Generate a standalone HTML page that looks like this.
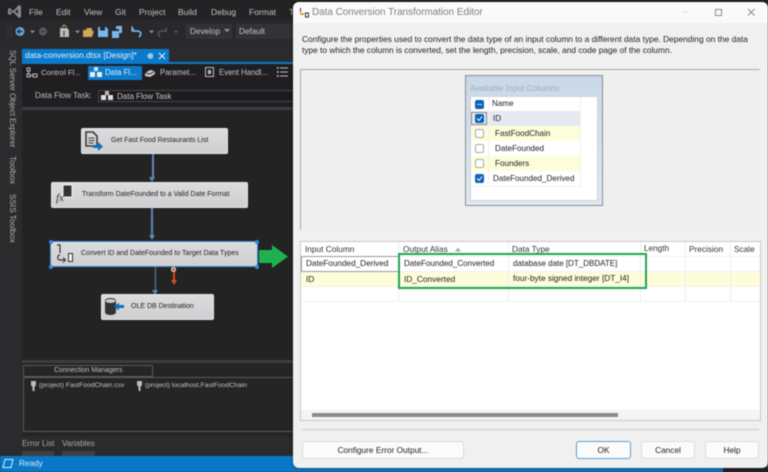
<!DOCTYPE html>
<html><head><meta charset="utf-8">
<style>
html,body{margin:0;padding:0;width:768px;height:472px;overflow:hidden;background:#2b2b2e}
body{position:relative;font-family:"Liberation Sans",sans-serif;filter:blur(.45px)}
.a{position:absolute}
.t{position:absolute;white-space:nowrap;line-height:12px;font-size:9px}
.m{color:#c2c2c2;font-size:8.500px}
.box{position:absolute;background:linear-gradient(#dcdcde,#cfcfd2);border-radius:2px;border:1px solid #e6e6e6;box-sizing:border-box}
.n{position:absolute;color:#222;font-size:7px;line-height:10px;white-space:nowrap}
.cb{position:absolute;width:9px;height:9px;box-sizing:border-box;border-radius:2px}
.on{background:#0a63b8}
.off{background:#fdfdfd;border:1px solid #a8a8a8}
.btn{position:absolute;box-sizing:border-box;height:18px;background:#fbfbfb;border:1px solid #dcdcdc;border-radius:3px;text-align:center;line-height:16px;font-size:8.300px;color:#222}
.v{position:absolute;width:1px;background:#ececec}
.h{position:absolute;height:1px;background:#f0f0f0}
.l{color:#222;font-size:8.100px}
</style></head><body>

<!-- top chrome -->
<div class="a" style="left:0;top:0;width:768px;height:20px;background:#232326"></div>
<div class="a" style="left:0;top:20px;width:768px;height:22px;background:#29292c"></div>
<svg class="a" style="left:7px;top:4px" width="15" height="15" viewBox="0 0 15 15"><path d="M1 5l2-1 3 3 6-6 2 1v11l-2 1-6-6-3 3-2-1zM3 6v3l1.500-1.500zM11 5l-3 2.500 3 2.500z" fill="#8a8a8e" fill-rule="evenodd"/></svg>
<div class="t m" style="left:29px;top:6px">File</div>
<div class="t m" style="left:56px;top:6px">Edit</div>
<div class="t m" style="left:84px;top:6px">View</div>
<div class="t m" style="left:115px;top:6px">Git</div>
<div class="t m" style="left:139px;top:6px">Project</div>
<div class="t m" style="left:178px;top:6px">Build</div>
<div class="t m" style="left:211px;top:6px">Debug</div>
<div class="t m" style="left:249px;top:6px">Format</div>
<div class="t m" style="left:289px;top:6px">T</div>

<!-- toolbar -->
<svg class="a" style="left:6px;top:23px" width="175" height="17" viewBox="0 0 175 17">
<path d="M2 3v11M5 3v11" stroke="#46464a" stroke-dasharray="1 1" fill="none"/>
<circle cx="14" cy="8.500" r="4.500" fill="#66a9e0"/><path d="M17 8.500h-5M14 6l-2.500 2.500L14 11" stroke="#1d2a35" stroke-width="1.200" fill="none"/>
<path d="M24 7.500h5l-2.500 3z" fill="#8a8a8e"/>
<circle cx="37" cy="8.500" r="4" fill="#5a5a5e"/><path d="M35 8.500h4" stroke="#29292c"/>
<path d="M54 5h7l2 2v7h-9z" fill="#d4d4d4" opacity=".85"/><path d="M56 4l2-2 3 2" stroke="#d9a64a" fill="none"/><path d="M58 8v5" stroke="#333"/>
<path d="M69 7.500h5l-2.500 3z" fill="#8a8a8e"/>
<path d="M77 7h3l1-2h5v3h2l-2 6h-9z" fill="#d6a654"/>
<path d="M92 4h8l2 2v8H92z" fill="#79b8ec"/><rect x="94" y="4" width="5" height="3.500" fill="#1d2a35"/>
<path d="M106 8h7v7h-7z" fill="#79b8ec"/><path d="M110 3h6v7h-3V6h-3z" fill="#79b8ec"/>
<path d="M127 5v3h4c4 0 5 3 2 6" stroke="#79b8ec" stroke-width="1.600" fill="none"/><path d="M126 3v5h5" stroke="#79b8ec" stroke-width="1.200" fill="none"/>
<path d="M143 7.500h5l-2.500 3z" fill="#8a8a8e"/>
<path d="M160 5v3h-4c-4 0-5 3-2 6" stroke="#59595c" stroke-width="1.500" fill="none"/>
<path d="M168 7.500h4l-2 3z" fill="#59595c"/>
</svg>
<div class="a" style="left:186px;top:24px;width:46px;height:15px;background:#333337"></div>
<div class="t m" style="left:190px;top:26px;font-size:8.200px">Develop</div>
<svg class="a" style="left:224px;top:29px" width="6" height="4"><path d="M0 0h6l-3 3z" fill="#9a9a9a"/></svg>
<div class="a" style="left:236px;top:24px;width:60px;height:15px;background:#333337"></div>
<div class="t m" style="left:239px;top:26px;font-size:8.200px">Default</div>

<!-- left rail -->
<div class="a" style="left:0;top:42px;width:22px;height:418px;background:#2b2b2e"></div>
<div class="t" style="left:6px;top:50px;color:#b0b0b0;font-size:7.900px;line-height:12px;writing-mode:vertical-rl;">SQL Server Object Explorer</div>
<div class="t" style="left:6px;top:156px;color:#b0b0b0;font-size:8.200px;line-height:12px;writing-mode:vertical-rl;">Toolbox</div>
<div class="t" style="left:6px;top:194px;color:#b0b0b0;font-size:8.200px;line-height:12px;writing-mode:vertical-rl;">SSIS Toolbox</div>

<!-- doc tab -->
<div class="a" style="left:22px;top:49px;width:147px;height:14px;background:#0a7acb"></div>
<div class="a" style="left:22px;top:62px;width:272px;height:2px;background:#0a7acb"></div>
<div class="t" style="left:25px;top:50px;color:#e8f2fa;font-size:8.250px">data-conversion.dtsx [Design]*</div>
<svg class="a" style="left:145px;top:52px" width="22" height="8"><path d="M2 4h6M4 2v4h3V2z" stroke="#dcecf7" fill="none"/><path d="M14 1l6 6M20 1l-6 6" stroke="#e8f2fa"/></svg>

<!-- designer tabs -->
<div class="a" style="left:22px;top:64px;width:272px;height:44px;background:#1f1f21"></div>
<div class="a" style="left:88px;top:66px;width:54px;height:14px;background:#0a7acb"></div>
<svg class="a" style="left:26px;top:67px" width="12" height="11"><rect x="1" y="1" width="3" height="3" fill="none" stroke="#bbb"/><rect x="1" y="7" width="3" height="3" fill="none" stroke="#bbb"/><rect x="7" y="7" width="4" height="3" fill="none" stroke="#bbb"/><path d="M2.500 4v3M4 8.500h3" stroke="#bbb"/></svg>
<div class="t" style="left:41px;top:67px;color:#c4c4c4;font-size:7.700px">Control Fl...</div>
<svg class="a" style="left:90px;top:67px" width="12" height="11"><rect x="4" y="0" width="4" height="4" fill="#ddd"/><rect x="0" y="5" width="5" height="5" fill="#eee"/><rect x="7" y="5" width="5" height="5" fill="#eee"/></svg>
<div class="t" style="left:105px;top:67px;color:#e8f2fa;font-size:7.800px">Data Fl...</div>
<svg class="a" style="left:145px;top:68px" width="11" height="10"><path d="M0 5l5-3 5 1v3l-5 3-5-1z" fill="#c8c8c8"/><path d="M0 5l5 1 5-3" stroke="#333" fill="none"/></svg>
<div class="t" style="left:160px;top:67px;color:#c4c4c4;font-size:7.800px">Paramet...</div>
<svg class="a" style="left:205px;top:67px" width="10" height="11"><rect x=".5" y=".5" width="8" height="9" fill="none" stroke="#bbb"/><rect x="3" y="3" width="3" height="4" fill="#bbb"/></svg>
<div class="t" style="left:219px;top:67px;color:#c4c4c4;font-size:7.800px">Event Handl...</div>
<svg class="a" style="left:277px;top:67px" width="11" height="11"><path d="M3 1h8M3 5h8M3 9h8" stroke="#bbb"/><path d="M0 1h1.500M0 5h1.500M0 9h1.500" stroke="#ddd" stroke-width="1.500"/></svg>
<div class="t" style="left:35px;top:90px;color:#bdbdbd;font-size:8px">Data Flow Task:</div>
<div class="a" style="left:98px;top:90px;width:196px;height:12px;border:1px solid #47474b;background:#1c1c1e;box-sizing:border-box"></div>
<svg class="a" style="left:101px;top:91px" width="12" height="10"><rect x="4" y="0" width="4" height="4" fill="#bbb"/><rect x="0" y="4" width="5" height="5" fill="#ddd"/><rect x="7" y="4" width="5" height="5" fill="#ddd"/></svg>
<div class="t" style="left:117px;top:91px;color:#c4c4c4;font-size:8px">Data Flow Task</div>

<!-- design surface -->
<div class="a" style="left:22px;top:107px;width:272px;height:3px;background:#3c3c42"></div>
<div class="a" style="left:22px;top:110px;width:272px;height:250px;background:#232324"></div>

<!-- connectors -->
<div class="a" style="left:152px;top:153px;width:1.500px;height:26px;background:#5f86b8"></div>
<div class="a" style="left:149px;top:177px;width:0;height:0;border-left:3px solid transparent;border-right:3px solid transparent;border-top:5px solid #5f86b8"></div>
<div class="a" style="left:151px;top:207px;width:1.500px;height:30px;background:#5f86b8"></div>
<div class="a" style="left:149px;top:235px;width:0;height:0;border-left:3px solid transparent;border-right:3px solid transparent;border-top:5px solid #5f86b8"></div>
<div class="a" style="left:154.500px;top:267px;width:1.500px;height:25px;background:#5f86b8"></div>
<div class="a" style="left:152px;top:290px;width:0;height:0;border-left:3px solid transparent;border-right:3px solid transparent;border-top:5px solid #5f86b8"></div>
<div class="a" style="left:173px;top:270px;width:1.500px;height:12px;background:#d8491e"></div>
<div class="a" style="left:171px;top:280px;width:0;height:0;border-left:3px solid transparent;border-right:3px solid transparent;border-top:5px solid #d8491e"></div>
<div class="a" style="left:171px;top:267px;width:5px;height:5px;border-radius:50%;background:#d8491e;border:1px solid #eee;box-sizing:border-box"></div>

<!-- boxes -->
<div class="box" style="left:81px;top:128px;width:147px;height:26px"></div>
<svg class="a" style="left:84px;top:130px" width="21" height="22"><path d="M2 2h7l4 4v10H2z" fill="none" stroke="#3b3b3b" stroke-width="1.600"/><path d="M4.500 8h6M4.500 10.500h6M4.500 13h5" stroke="#3b3b3b"/><path d="M9 15h5v-3l5 4.500-5 4.500v-3H9z" fill="#0f6fc0"/></svg>
<div class="n" style="left:111px;top:136px">Get Fast Food Restaurants List</div>

<div class="box" style="left:51px;top:182px;width:197px;height:26px"></div>
<svg class="a" style="left:55px;top:184px" width="20" height="20"><rect x="8" y="1" width="9" height="12" fill="#333" stroke="#f4f4f4"/><text x="1" y="17" font-family="Liberation Serif,serif" font-style="italic" font-size="11" fill="#333">fx</text></svg>
<div class="n" style="left:82px;top:190px">Transform DateFounded to a Valid Date Format</div>

<div class="box" style="left:50px;top:241px;width:208px;height:26px;border:1.500px solid #3d8fe0"></div>
<div class="a" style="left:49px;top:240px;width:4px;height:4px;border-radius:50%;background:#2f8be8"></div>
<div class="a" style="left:255px;top:240px;width:4px;height:4px;border-radius:50%;background:#2f8be8"></div>
<div class="a" style="left:49px;top:265px;width:4px;height:4px;border-radius:50%;background:#2f8be8"></div>
<div class="a" style="left:255px;top:265px;width:4px;height:4px;border-radius:50%;background:#2f8be8"></div>
<svg class="a" style="left:55px;top:243px" width="20" height="22"><path d="M2 2h3v8" stroke="#333" fill="none" stroke-width="1.200"/><path d="M5 12c-3 0-3 5 0 5h5" stroke="#333" fill="none" stroke-width="1.200"/><path d="M8 14.500l2.500 2.500L8 19.500" stroke="#333" fill="none"/><rect x="13.500" y="10.500" width="4" height="8" fill="#f4f4f4" stroke="#333"/></svg>
<div class="n" style="left:81px;top:249px">Convert ID and DateFounded to Target Data Types</div>

<div class="box" style="left:101px;top:294px;width:113px;height:26px"></div>
<svg class="a" style="left:104px;top:297px" width="21" height="20"><path d="M1 4c0-4 11-4 11 0v11c0 4-11 4-11 0z" fill="#333"/><ellipse cx="6.500" cy="4" rx="5" ry="2" fill="#ccc"/><path d="M10 9.500l5-4v2.500h5v3h-5v2.500z" fill="#0f6fc0"/></svg>
<div class="n" style="left:131px;top:302px">OLE DB Destination</div>

<!-- green arrow -->
<svg class="a" style="left:258px;top:245px" width="32" height="24"><path d="M1 5h13V0l16 11.500L14 23v-5H1z" fill="#1fb14f"/></svg>

<!-- connection managers -->
<div class="a" style="left:22px;top:360px;width:272px;height:3px;background:#3c3c42"></div>
<div class="a" style="left:22px;top:363px;width:272px;height:73px;background:#252526"></div>
<div class="a" style="left:23px;top:365px;width:130px;height:12px;border:1px solid #5a5a5e;box-sizing:border-box"></div>
<div class="a" style="left:23px;top:377px;width:271px;height:1px;background:#5a5a5e"></div>
<div class="a" style="left:23px;top:377px;width:1px;height:55px;background:#5a5a5e"></div>
<div class="a" style="left:23px;top:431px;width:271px;height:1px;background:#5a5a5e"></div>
<div class="t" style="left:54px;top:365px;color:#c4c4c4;font-size:7px">Connection Managers</div>
<svg class="a" style="left:30px;top:380px" width="8" height="12"><path d="M1 1h5v4l-1.500 2v4h-2V7L1 5z" fill="#bbb"/></svg>
<div class="t" style="left:39px;top:380px;color:#c4c4c4;font-size:6.800px">(project) FastFoodChain.csv</div>
<svg class="a" style="left:136px;top:380px" width="8" height="12"><path d="M1 1h5v4l-1.500 2v4h-2V7L1 5z" fill="#bbb"/></svg>
<div class="t" style="left:145px;top:380px;color:#c4c4c4;font-size:6.800px">(project) localhost.FastFoodChain</div>

<!-- bottom tabs -->
<div class="a" style="left:0;top:436px;width:294px;height:20px;background:#2b2b2e"></div>
<div class="t" style="left:22px;top:438px;color:#a8a8a8;font-size:8px">Error List</div>
<div class="t" style="left:62px;top:438px;color:#a8a8a8;font-size:8px">Variables</div>
<div class="a" style="left:22px;top:451px;width:32px;height:5px;background:#3f3f44"></div>
<div class="a" style="left:62px;top:451px;width:33px;height:5px;background:#3f3f44"></div>

<!-- status bar -->
<div class="a" style="left:0;top:456px;width:768px;height:16px;background:#0a78c8"></div>
<div class="a" style="left:723px;top:467px;width:45px;height:5px;background:#222"></div>
<svg class="a" style="left:2px;top:458px" width="12" height="11"><path d="M3 1.500h8L9 9.500H1z" fill="none" stroke="#d8ecfa"/></svg>
<div class="t" style="left:19px;top:458px;color:#d8ecfa;font-size:8.200px">Ready</div>

<!-- dialog -->
<div class="a" style="left:293px;top:2px;width:475px;height:466px;background:#f0f0f0;border-radius:6px;box-shadow:0 0 3px rgba(0,0,0,.6)"></div>
<div class="a" style="left:293px;top:2px;width:475px;height:21px;background:#fafafa;border-radius:6px 6px 0 0"></div>
<svg class="a" style="left:298px;top:7px" width="12" height="11"><path d="M2.500 1v4" stroke="#333"/><path d="M2 6h4v2H2z" fill="#d99a2b"/><rect x="7.500" y="6" width="3" height="4" fill="none" stroke="#333"/></svg>
<div class="t" style="left:312px;top:7px;color:#7d7d7d;font-size:9.900px">Data Conversion Transformation Editor</div>
<svg class="a" style="left:680px;top:7px" width="80" height="11"><path d="M2 5h7" stroke="#e4e4e4"/><rect x="35.500" y="2.500" width="6" height="6" fill="none" stroke="#8a8a8a"/><path d="M68 2l6.500 6.500M74.500 2L68 8.500" stroke="#8a8a8a"/></svg>
<div class="t" style="left:302px;top:33px;color:#222;font-size:8.400px;line-height:12px">Configure the properties used to convert the data type of an input column to a different data type. Depending on the data</div>
<div class="t" style="left:302px;top:44px;color:#222;font-size:8.340px;line-height:12px">type to which the column is converted, set the length, precision, scale, and code page of the column.</div>

<!-- top panel -->
<div class="a" style="left:300px;top:69px;width:460px;height:161px;box-sizing:border-box;border-top:1px solid #a5a5a5;border-left:1px solid #a5a5a5;border-right:1px solid #ececec;border-bottom:1px solid #ececec;background:#efefef"></div>
<div class="a" style="left:465px;top:75px;width:138px;height:131px;box-sizing:border-box;border:1px solid #8a8e94;background:linear-gradient(#c9d8e8,#dfe8f2)"></div>
<div class="t" style="left:470px;top:82px;color:#a2acb6;font-size:8.300px">Available Input Columns</div>
<div class="a" style="left:470px;top:96px;width:128px;height:105px;background:#fff;border:1px solid #cfd3d8;box-sizing:border-box"></div>
<div class="a" style="left:471px;top:111px;width:109px;height:15px;background:#e6eaf0"></div>
<div class="a" style="left:471px;top:126px;width:109px;height:15px;background:#fdfdda"></div>
<div class="a" style="left:471px;top:156px;width:109px;height:15px;background:#fdfdda"></div>
<div class="a" style="left:488px;top:97px;width:1px;height:89px;background:#f0f0f0"></div>
<div class="a" style="left:580px;top:97px;width:1px;height:89px;background:#f0f0f0"></div>
<div class="a" style="left:471px;top:186px;width:110px;height:1px;background:#f0f0f0"></div>

<div class="cb on" style="left:475px;top:100px"></div><div class="a" style="left:477px;top:104px;width:5px;height:1px;background:#b8d4ee"></div>
<div class="t l" style="left:492px;top:98px">Name</div>
<div class="a" style="left:471px;top:112px;width:16px;height:13px;border:1px solid #888;box-sizing:border-box"></div>
<div class="cb on" style="left:475px;top:114px"></div><svg class="a" style="left:475px;top:114px" width="9" height="9"><path d="M2 4.500l2 2 3-4" stroke="#fff" fill="none"/></svg>
<div class="t l" style="left:493px;top:113px">ID</div>
<div class="cb off" style="left:475px;top:129px"></div>
<div class="t l" style="left:495px;top:128px">FastFoodChain</div>
<div class="cb off" style="left:475px;top:144px"></div>
<div class="t l" style="left:495px;top:143px">DateFounded</div>
<div class="cb off" style="left:475px;top:159px"></div>
<div class="t l" style="left:495px;top:158px">Founders</div>
<div class="cb on" style="left:475px;top:174px"></div><svg class="a" style="left:475px;top:174px" width="9" height="9"><path d="M2 4.500l2 2 3-4" stroke="#fff" fill="none"/></svg>
<div class="t l" style="left:493px;top:173px">DateFounded_Derived</div>

<!-- grid -->
<div class="a" style="left:300px;top:241px;width:461px;height:180px;background:#fff;border:1px solid #c8c8c8;box-sizing:border-box"></div>
<div class="a" style="left:301px;top:272px;width:459px;height:15px;background:#fdfdda"></div>
<div class="a" style="left:301px;top:410px;width:459px;height:10px;background:#f4f4f4"></div>
<div class="a" style="left:312px;top:413px;width:306px;height:4px;background:#8c8c8c"></div>
<div class="h" style="left:301px;top:256px;width:459px"></div>
<div class="h" style="left:301px;top:271px;width:459px"></div>
<div class="h" style="left:301px;top:286px;width:459px"></div>
<div class="h" style="left:301px;top:301px;width:459px"></div>
<div class="v" style="left:398px;top:242px;height:60px"></div>
<div class="v" style="left:508px;top:242px;height:60px"></div>
<div class="v" style="left:640px;top:242px;height:60px"></div>
<div class="v" style="left:685px;top:242px;height:60px"></div>
<div class="v" style="left:730px;top:242px;height:60px"></div>
<div class="t" style="left:305px;top:243px;color:#333;font-size:8.300px">Input Column</div>
<div class="t" style="left:403px;top:243px;color:#333;font-size:8.300px">Output Alias</div>
<svg class="a" style="left:455px;top:247px" width="7" height="5"><path d="M0 4.500L3 .5l3 4z" fill="#aaa"/></svg>
<div class="t" style="left:512px;top:243px;color:#333;font-size:8.300px">Data Type</div>
<div class="t" style="left:644px;top:243px;color:#333;font-size:8.200px">Length</div>
<div class="t" style="left:689px;top:243px;color:#333;font-size:8.300px">Precision</div>
<div class="t" style="left:734px;top:243px;color:#333;font-size:8.300px">Scale</div>
<div class="a" style="left:301px;top:256px;width:98px;height:16px;border:1px solid #9a9a9a;box-sizing:border-box;background:#fff"></div>
<div class="t" style="left:306px;top:258px;color:#222;font-size:8.200px">DateFounded_Derived</div>
<div class="t" style="left:404px;top:258px;color:#222;font-size:8.050px">DateFounded_Converted</div>
<div class="t" style="left:513px;top:258px;color:#222;font-size:8px">database date [DT_DBDATE]</div>
<div class="t" style="left:306px;top:273px;color:#222;font-size:8.300px">ID</div>
<div class="t" style="left:404px;top:273px;color:#222;font-size:8.300px">ID_Converted</div>
<div class="t" style="left:513px;top:273px;color:#222;font-size:8.250px">four-byte signed integer [DT_I4]</div>
<div class="a" style="left:398px;top:253px;width:249px;height:36px;border:2.500px solid #1fa64f;box-sizing:border-box"></div>

<!-- footer -->
<div class="a" style="left:302px;top:429px;width:457px;height:1px;background:#c8c8c8"></div>
<div class="btn" style="left:302px;top:441px;width:162px">Configure Error Output...</div>
<div class="btn" style="left:576px;top:441px;width:55px;border-color:#5a9fd4">OK</div>
<div class="btn" style="left:641px;top:441px;width:54px">Cancel</div>
<div class="btn" style="left:705px;top:441px;width:54px">Help</div>
</body></html>
